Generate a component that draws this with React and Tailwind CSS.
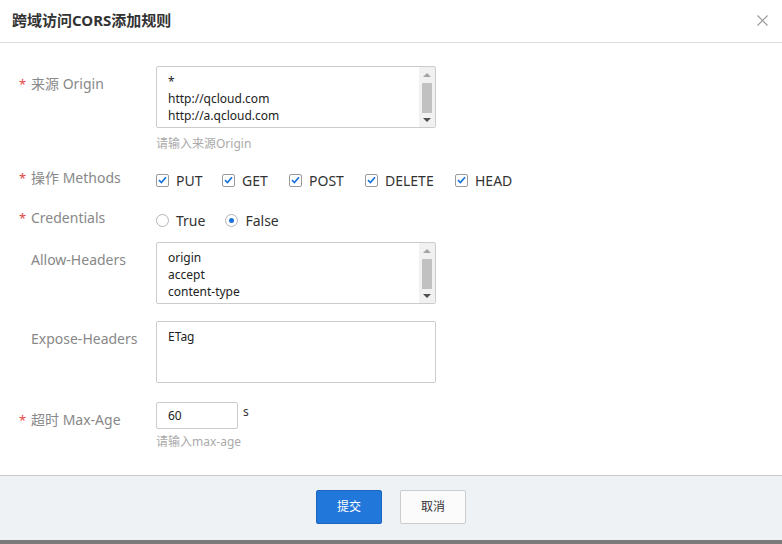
const font = { fontFamily: '"Noto Sans", "Noto Sans CJK SC", sans-serif' };

function Label({ required, children }) {
  return (
    <div className="w-[156px] shrink-0 pl-[19px] pt-[9px] flex text-[14px] leading-[18px] text-[#888]">
      <span className="w-[12px] text-[#e54545] text-[13px]">{required ? "*" : ""}</span>
      <span>{children}</span>
    </div>
  );
}

function FakeScroll() {
  return (
    <div className="w-[16px] shrink-0 bg-[#f1f1f1] flex flex-col items-center pt-[6px]">
      <div className="w-0 h-0 border-l-[4px] border-r-[4px] border-b-[4px] border-l-transparent border-r-transparent border-b-[#a3a3a3]" />
      <div className="w-[10px] h-[30px] bg-[#c1c1c1] mt-[6px]" />
      <div className="w-0 h-0 mt-[5px] border-l-[4px] border-r-[4px] border-t-[4px] border-l-transparent border-r-transparent border-t-[#505050]" />
    </div>
  );
}

function Area({ lines, scroll }) {
  return (
    <div className="w-[280px] h-[62px] border border-[#ccc] rounded-[2px] flex overflow-hidden bg-white">
      <div className="flex-1 pl-[11px] pt-[6px] text-[12px] leading-[17px] text-[#222] overflow-hidden">
        {lines.map((l, i) => (
          <div key={i}>{l}</div>
        ))}
      </div>
      {scroll && <FakeScroll />}
    </div>
  );
}

function Check({ label, className }) {
  return (
    <label className={"flex items-center " + className}>
      <span className="w-[13px] h-[13px] border border-[#9a9a9a] rounded-[2px] flex items-center justify-center bg-white">
        <svg width="9" height="8" viewBox="0 0 9 8">
          <path d="M1 4.2 L3.4 6.5 L8 1.3" fill="none" stroke="#1a73d9" strokeWidth="1.7" />
        </svg>
      </span>
      <span className="ml-[7px] text-[14px] text-[#333]">{label}</span>
    </label>
  );
}

function Radio({ label, checked }) {
  return (
    <label className="flex items-center mr-[20px]">
      <span className="w-[13px] h-[13px] border border-[#b5b5b5] rounded-full flex items-center justify-center bg-white">
        {checked && <span className="w-[5px] h-[5px] rounded-full bg-[#1a73d9]" />}
      </span>
      <span className="ml-[7px] text-[14px] text-[#333]">{label}</span>
    </label>
  );
}

export default function App() {
  return (
    <div className="w-[782px] h-[544px] bg-white flex flex-col" style={font}>
      <div className="h-[43px] shrink-0 border-b border-[#ddd] flex items-center justify-between pl-[12px] pr-[14px] pb-[2px]">
        <h1 className="text-[15px] font-bold text-[#333]">跨域访问CORS添加规则</h1>
        <svg width="11" height="11" viewBox="0 0 11 11">
          <path d="M0.5 0.5 L10.5 10.5 M10.5 0.5 L0.5 10.5" stroke="#999" strokeWidth="1.2" />
        </svg>
      </div>

      <div className="flex-1 pt-[23px]">
        <div className="flex">
          <Label required>来源 Origin</Label>
          <div>
            <Area scroll lines={["*", "http://qcloud.com", "http://a.qcloud.com", "http://b.qcloud.com"]} />
            <div className="mt-[9px] text-[12px] leading-[14px] text-[#aaa]">请输入来源Origin</div>
          </div>
        </div>

        <div className="flex mt-[9px]">
          <Label required>操作 Methods</Label>
          <div className="flex items-center pt-[11px] h-[29px]">
            <Check label="PUT" className="w-[66px]" />
            <Check label="GET" className="w-[67px]" />
            <Check label="POST" className="w-[76px]" />
            <Check label="DELETE" className="w-[90px]" />
            <Check label="HEAD" />
          </div>
        </div>

        <div className="flex mt-[11px]">
          <Label required>Credentials</Label>
          <div className="flex items-center pt-[11px] h-[29px]">
            <Radio label="True" />
            <Radio label="False" checked />
          </div>
        </div>

        <div className="flex mt-[13px]">
          <Label>Allow-Headers</Label>
          <Area scroll lines={["origin", "accept", "content-type", "authorization"]} />
        </div>

        <div className="flex mt-[17px]">
          <Label>Expose-Headers</Label>
          <div className="h-[63px]">
            <Area lines={["ETag"]} />
          </div>
        </div>

        <div className="flex mt-[18px]">
          <Label required>超时 Max-Age</Label>
          <div>
            <div className="flex items-start">
              <div className="w-[82px] h-[27px] border border-[#ccc] rounded-[2px] pl-[11px] flex items-center text-[12px] text-[#222]">
                60
              </div>
              <span className="ml-[5px] mt-[1px] text-[12px] text-[#333]">s</span>
            </div>
            <div className="mt-[6px] text-[12px] leading-[14px] text-[#aaa]">请输入max-age</div>
          </div>
        </div>
      </div>

      <div className="h-[65px] shrink-0 border-t border-[#c8c8c8] bg-[#eff2f5] flex items-center justify-center gap-[18px] pb-[2px]">
        <button className="w-[66px] h-[34px] bg-[#2277da] border border-[#1c66c2] rounded-[2px] text-white text-[12px]">
          提交
        </button>
        <button className="w-[66px] h-[34px] bg-[#fbfbfb] border border-[#ccc] rounded-[2px] text-[#333] text-[12px]">
          取消
        </button>
      </div>
      <div className="h-[4px] shrink-0 bg-[#7a7a7a]" />
    </div>
  );
}
